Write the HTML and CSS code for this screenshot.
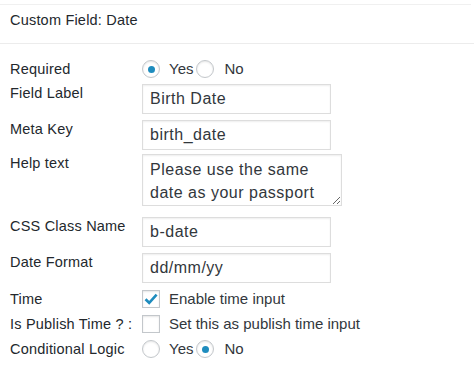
FILE: index.html
```html
<!DOCTYPE html>
<html lang="en">
<head>
  <meta charset="utf-8">
  <title>Custom Field: Date</title>
  <link rel="stylesheet" href="styles.css">
</head>
<body>
  <div class="postbox">
    <h2 class="hndle">Custom Field: Date</h2>
    <div class="inside">
      <div class="row row-choice">
        <label class="field-name">Required</label>
        <div class="field-value">
          <span class="radio is-checked"></span><span class="opt">Yes</span>
          <span class="radio"></span><span class="opt">No</span>
        </div>
      </div>
      <div class="row">
        <label class="field-name">Field Label</label>
        <input class="text-input" type="text" value="Birth Date">
      </div>
      <div class="row row-tight">
        <label class="field-name">Meta Key</label>
        <input class="text-input" type="text" value="birth_date">
      </div>
      <div class="row row-wide">
        <label class="field-name">Help text</label>
        <textarea class="text-area">Please use the same date as your passport</textarea>
      </div>
      <div class="row">
        <label class="field-name">CSS Class Name</label>
        <input class="text-input" type="text" value="b-date">
      </div>
      <div class="row row-loose">
        <label class="field-name">Date Format</label>
        <input class="text-input" type="text" value="dd/mm/yy">
      </div>
      <div class="row row-choice row-loose">
        <label class="field-name">Time</label>
        <div class="field-value">
          <span class="check">
            <svg width="14" height="12" viewBox="0 0 14 12"><path d="M1.5 6.2 L5.2 9.8 L12.6 1.6" fill="none" stroke="#1e8cbe" stroke-width="2.6"/></svg>
          </span><span class="opt">Enable time input</span>
        </div>
      </div>
      <div class="row row-choice row-loose">
        <label class="field-name">Is Publish Time ? :</label>
        <div class="field-value">
          <span class="check"></span><span class="opt">Set this as publish time input</span>
        </div>
      </div>
      <div class="row row-choice">
        <label class="field-name">Conditional Logic</label>
        <div class="field-value">
          <span class="radio"></span><span class="opt">Yes</span>
          <span class="radio is-checked"></span><span class="opt">No</span>
        </div>
      </div>
    </div>
  </div>
</body>
</html>
```

FILE: styles.css
```css
* {
  box-sizing: border-box;
  margin: 0;
  padding: 0;
}
body {
  font-family: 'Liberation Sans', Arial, sans-serif;
  background: #fff;
  color: #23282d;
}
.postbox {
  margin: 4px 3px 0 0;
  border-top: 1px solid #f0f0f0;
}
.hndle {
  font-size: 14.5px;
  font-weight: 400;
  letter-spacing: 0.2px;
  line-height: 20px;
  padding: 5px 10px 13px;
  margin-right: -3px;
  border-bottom: 1px solid #ececec;
}
.inside {
  padding: 16px 0 0 10px;
}
.row {
  display: flex;
  align-items: flex-start;
  margin-bottom: 6px;
}
.row-tight {
  margin-bottom: 4px;
}
.row-wide {
  margin-bottom: 11px;
}
.row-loose {
  margin-bottom: 7px;
}
.row-choice {
  align-items: center;
}
.field-name {
  width: 132px;
  flex-shrink: 0;
  font-size: 14.5px;
  letter-spacing: 0.2px;
  line-height: 16px;
  padding-top: 1px;
}
.row-choice .field-name {
  padding-top: 0;
}
.text-input,
.text-area {
  font-family: 'Liberation Sans', Arial, sans-serif;
  font-size: 16px;
  letter-spacing: 0.5px;
  color: #32373c;
  border: 1px solid #ddd;
  box-shadow: inset 0 1px 2px rgba(0, 0, 0, 0.07);
  background: #fff;
  outline: none;
}
.text-input {
  width: 189px;
  height: 30px;
  padding: 0 7px;
}
.text-area {
  width: 200px;
  height: 52px;
  padding: 3px 7px;
  line-height: 23px;
  resize: both;
  overflow: hidden;
  display: block;
}
.field-value {
  display: flex;
  align-items: center;
  font-size: 15px;
  color: #32373c;
}
.radio,
.check {
  width: 18px;
  height: 18px;
  border: 1px solid #c3c7cb;
  background: #fff;
  box-shadow: inset 0 1px 2px rgba(0, 0, 0, 0.1);
  display: flex;
  align-items: center;
  justify-content: center;
  flex-shrink: 0;
}
.radio {
  border-radius: 50%;
}
.radio.is-checked::before {
  content: '';
  width: 7px;
  height: 7px;
  border-radius: 50%;
  background: #1e8cbe;
}
.opt {
  margin-left: 9px;
  margin-right: 3px;
  line-height: 18px;
}
.opt + .radio {
  margin-left: 0;
}
.row-choice .opt:last-child {
  margin-right: 0;
}
.field-value .radio + .opt + .radio + .opt {
  margin-left: 10px;
}
```
